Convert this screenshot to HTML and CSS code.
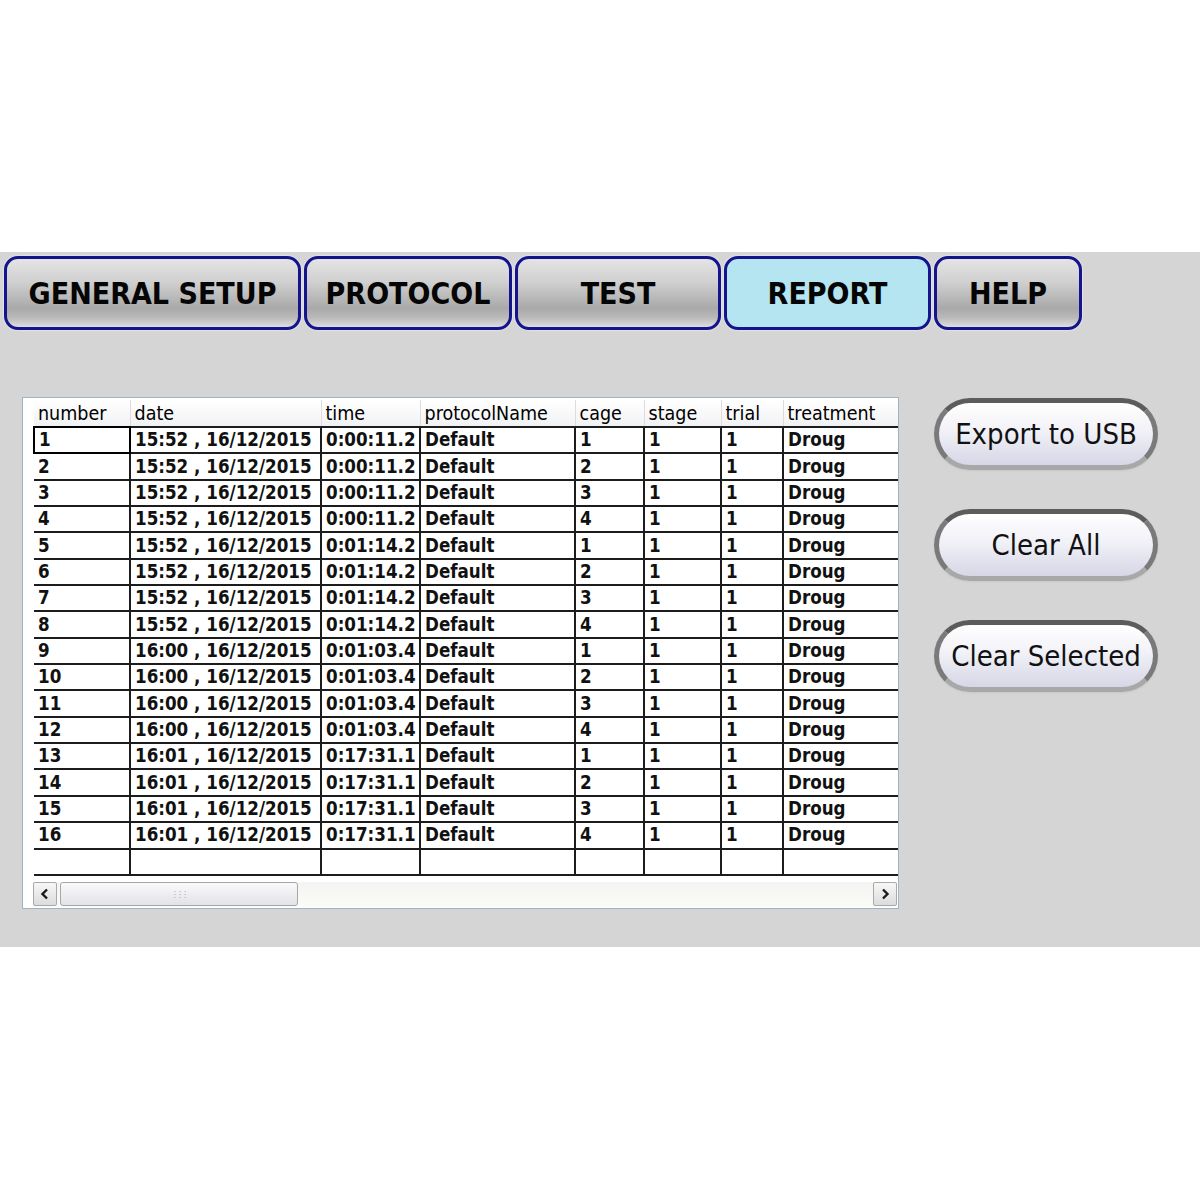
FILE: index.html
```html
<!DOCTYPE html>
<html lang="en">
  <head>
    <meta charset="UTF-8" />
    <meta name="viewport" content="width=device-width, initial-scale=1.0" />
    <title>Report</title>
    <link rel="stylesheet" href="styles.css">
  </head>

  <body>
    <main class="panel">
      <nav class="tabs">
        <button class="tab t-general">GENERAL SETUP</button>
        <button class="tab t-protocol">PROTOCOL</button>
        <button class="tab t-test">TEST</button>
        <button class="tab t-report active">REPORT</button>
        <button class="tab t-help">HELP</button>
      </nav>

      <div class="content">
        <div class="grid-frame">
          <table class="grid">
            <colgroup>
              <col class="c-number">
              <col class="c-date">
              <col class="c-time">
              <col class="c-proto">
              <col class="c-cage">
              <col class="c-stage">
              <col class="c-trial">
              <col class="c-treat">
            </colgroup>
            <thead>
              <tr>
                <th>number</th>
                <th>date</th>
                <th>time</th>
                <th>protocolName</th>
                <th>cage</th>
                <th>stage</th>
                <th>trial</th>
                <th>treatment</th>
              </tr>
            </thead>
            <tbody id="rows"></tbody>
          </table>
          <div class="hscroll">
            <button class="arrow">
              <svg width="10" height="12" viewBox="0 0 10 12"><path d="M7 1.5 L2.5 6 L7 10.5" fill="none" stroke="#1a1a1a" stroke-width="2.4"/></svg>
            </button>
            <div class="track">
              <div class="thumb"><span class="grip">&#8942;&#8942;&#8942;</span></div>
            </div>
            <button class="arrow">
              <svg width="10" height="12" viewBox="0 0 10 12"><path d="M3 1.5 L7.5 6 L3 10.5" fill="none" stroke="#1a1a1a" stroke-width="2.4"/></svg>
            </button>
          </div>
        </div>

        <div class="actions">
          <button class="pill">Export to USB</button>
          <button class="pill">Clear All</button>
          <button class="pill">Clear Selected</button>
        </div>
      </div>
    </main>

    <script>
      //report rows.....
      const runs = [
        ["15:52 , 16/12/2015", "0:00:11.2"],
        ["16:00 , 16/12/2015", "0:01:03.4"],
        ["16:01 , 16/12/2015", "0:17:31.1"],
      ];
      const data = [];
      for (let i = 0; i < 16; i++) {
        let r = runs[0];
        let t = i < 4 ? "0:00:11.2" : "0:01:14.2";
        if (i >= 8) {
          r = i < 12 ? runs[1] : runs[2];
          t = r[1];
        }
        data.push([i + 1, r[0], t, "Default", (i % 4) + 1, 1, 1, "Droug"]);
      }
      data.push(["", "", "", "", "", "", "", ""]);

      let rows = document.getElementById("rows");
      data.forEach((row, idx) => {
        let tr = document.createElement("tr");
        row.forEach((val, c) => {
          let td = document.createElement("td");
          td.innerText = val;
          if (idx === 0 && c === 0) td.className = "focus";
          tr.appendChild(td);
        });
        rows.appendChild(tr);
      });
    </script>
  </body>
</html>
```

FILE: styles.css
```css
* {
  margin: 0;
  padding: 0;
  box-sizing: border-box;
}

body {
  background-color: #ffffff;
  font-family: "DejaVu Sans Condensed", "DejaVu Sans", sans-serif;
}

.panel {
  margin-top: 252px;
  height: 695px;
  background-color: #d5d5d5;
}

/* top tab strip */
.tabs {
  display: flex;
  gap: 3px;
  padding: 4px 0 0 4px;
}

.tab {
  height: 74px;
  border: 3px solid #14148c;
  border-radius: 14px;
  background: linear-gradient(#e4e4e4 0%, #cfcfcf 35%, #a9a9a9 72%, #b9b9b9 86%, #dedede 100%);
  box-shadow: 0 0 2px #ffffff;
  font-family: "DejaVu Sans Condensed", "DejaVu Sans", sans-serif;
  font-weight: bold;
  font-size: 30px;
  color: #050505;
  cursor: pointer;
}

.t-general { width: 297px; }
.t-protocol { width: 208px; }
.t-test { width: 206px; }
.t-report { width: 207px; }
.t-help { width: 148px; }

.tab.active {
  background: #b5e5f1;
}

.content {
  display: flex;
  align-items: flex-start;
  padding: 67px 0 0 22px;
}

/* data grid */
.grid-frame {
  width: 877px;
  height: 512px;
  border: 1px solid #9fb3c6;
  background-color: #ffffff;
  padding: 2px 0 0 10px;
}

.grid {
  width: 864px;
  border-collapse: collapse;
  table-layout: fixed;
  font-size: 18.6px;
}

.c-number { width: 96px; }
.c-date { width: 191px; }
.c-time { width: 99px; }
.c-proto { width: 155px; }
.c-cage { width: 69px; }
.c-stage { width: 77px; }
.c-trial { width: 62px; }
.c-treat { width: 115px; }

.grid th {
  height: 27px;
  text-align: left;
  font-weight: normal;
  font-size: 19.5px;
  padding-left: 4px;
  color: #000;
  background: linear-gradient(#ffffff, #f1f2f4);
  border-left: 1px solid #dcdcdc;
  white-space: nowrap;
  overflow: hidden;
}

.grid th:first-child {
  border-left: none;
}

.grid td {
  height: 26.35px;
  padding: 0 0 0 4px;
  font-weight: bold;
  color: #111;
  white-space: nowrap;
  overflow: hidden;
  border-top: 2px solid #1c1c1c;
  border-bottom: 2px solid #1c1c1c;
  border-right: 2px solid #1c1c1c;
  line-height: 22px;
}

.grid td:last-child {
  border-right: none;
}

.grid td.focus {
  border: 2px solid #000;
}

/* horizontal scrollbar */
.hscroll {
  display: flex;
  align-items: center;
  gap: 3px;
  margin-top: 6px;
  height: 25px;
  width: 864px;
  background: linear-gradient(#f4f4f4, #fbfbf6);
}

.arrow {
  width: 24px;
  height: 24px;
  border: 1px solid #a9a9a9;
  border-radius: 2px;
  background: linear-gradient(#f7f7f7, #dcdcdc);
  display: flex;
  justify-content: center;
  align-items: center;
}

.track {
  flex: 1;
  height: 24px;
}

.thumb {
  width: 238px;
  height: 24px;
  border: 1px solid #a7a7a7;
  border-radius: 3px;
  background: linear-gradient(#fafafa, #e2e2e8);
  display: flex;
  justify-content: center;
  align-items: center;
}

.grip {
  font-size: 8px;
  color: #999;
  letter-spacing: -2px;
}

/* side buttons */
.actions {
  display: flex;
  flex-direction: column;
  gap: 39px;
  margin-left: 35px;
  margin-top: 1px;
}

.pill {
  width: 224px;
  height: 72px;
  border-radius: 36px;
  border: 5px solid #5c5c5c;
  border-bottom-color: #a8a8a8;
  border-left-color: #7a7a7a;
  border-right-color: #7a7a7a;
  background: linear-gradient(#ffffff 0%, #f1f1f8 45%, #d6d6e6 100%);
  box-shadow: 0 1px 2px #c8c8c8;
  font-family: "DejaVu Sans Condensed", "DejaVu Sans", sans-serif;
  font-size: 29px;
  color: #111;
  cursor: pointer;
}
```
